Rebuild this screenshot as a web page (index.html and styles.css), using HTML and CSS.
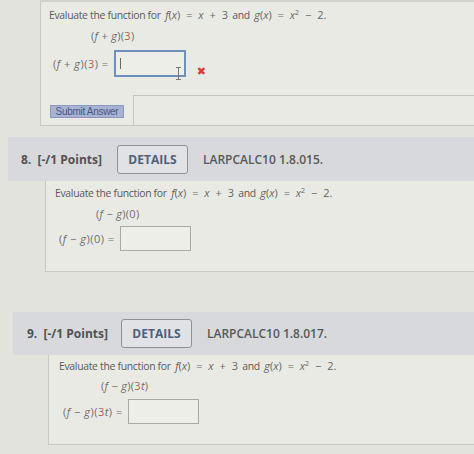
FILE: index.html
```html
<!DOCTYPE html>
<html>
<head>
<meta charset="utf-8">
<link rel="stylesheet" href="styles.css">
</head>
<body>
<div class="page">
  <section class="prev">
    <div class="qbody prev-body">
      <p class="stmt">Evaluate the function for <span class="m"><i>f</i>(<i>x</i>) = <i>x</i> + 3</span> and <span class="m"><i>g</i>(<i>x</i>) = <i>x</i><sup>2</sup> − 2.</span></p>
      <p class="expr">(<i>f</i> + <i>g</i>)(<span class="num">3</span>)</p>
      <div class="answer">
        <span class="lbl">(<i>f</i> + <i>g</i>)(<span class="num">3</span>) =</span>
        <span class="input active"><span class="caret"></span><span class="ibeam"></span></span>
        <span class="wrong">✖</span>
      </div>
      <div class="submit-row">
        <button class="submit">Submit Answer</button>
        <div class="frame"></div>
      </div>
    </div>
  </section>

  <section class="q q8">
    <header class="qhead">
      <span class="pts">8.&nbsp; [-/1 Points]</span>
      <span class="details">DETAILS</span>
      <span class="code">LARPCALC10 1.8.015.</span>
    </header>
    <div class="qbody">
      <p class="stmt">Evaluate the function for <span class="m"><i>f</i>(<i>x</i>) = <i>x</i> + 3</span> and <span class="m"><i>g</i>(<i>x</i>) = <i>x</i><sup>2</sup> − 2.</span></p>
      <p class="expr">(<i>f</i> − <i>g</i>)(0)</p>
      <div class="answer">
        <span class="lbl">(<i>f</i> − <i>g</i>)(0) =</span>
        <span class="input"></span>
      </div>
    </div>
  </section>

  <section class="q q9">
    <header class="qhead">
      <span class="pts">9.&nbsp; [-/1 Points]</span>
      <span class="details">DETAILS</span>
      <span class="code">LARPCALC10 1.8.017.</span>
    </header>
    <div class="qbody">
      <p class="stmt">Evaluate the function for <span class="m"><i>f</i>(<i>x</i>) = <i>x</i> + 3</span> and <span class="m"><i>g</i>(<i>x</i>) = <i>x</i><sup>2</sup> − 2.</span></p>
      <p class="expr">(<i>f</i> − <i>g</i>)(<span class="num">3</span><i>t</i>)</p>
      <div class="answer">
        <span class="lbl">(<i>f</i> − <i>g</i>)(<span class="num">3</span><i>t</i>) =</span>
        <span class="input"></span>
      </div>
    </div>
  </section>
</div>
</body>
</html>
```

FILE: styles.css
```css
html, body {
  margin: 0;
  padding: 0;
}
body {
  background: #e3e3dd;
  font-family: "Open Sans", "Liberation Sans", sans-serif;
  color: #595959;
  width: 474px;
  height: 454px;
  overflow: hidden;
}
.page {
  display: flex;
  flex-direction: column;
}
p { margin: 0; }

.qbody {
  background: #eaeae5;
  border-left: 1px solid #c9c9c3;
  border-bottom: 1px solid #c9c9c3;
  box-sizing: border-box;
  display: flex;
  flex-direction: column;
}
.prev-body {
  margin-left: 40px;
  height: 126px;
  padding: 6px 0 0 8px;
  border-top: 2px solid #d2d2cc;
}
.stmt {
  font-size: 10.4px;
  line-height: 14px;
  letter-spacing: -0.3px;
  white-space: nowrap;
}
.m {
  color: #666;
  font-size: 11px;
  letter-spacing: 0;
  word-spacing: 3px;
  margin: 0 2px;
}
.m i, .expr i, .lbl i { font-style: italic; }
sup {
  font-size: 7px;
  line-height: 0;
  vertical-align: 4px;
}
.expr {
  font-size: 11px;
  line-height: 14px;
  letter-spacing: 0.3px;
  color: #6e6e6e;
  margin: 7px 0 0 42px;
}
.num { color: #b55a50; }
.answer {
  display: flex;
  align-items: center;
  gap: 5px;
  margin: 6px 0 0 4px;
  font-size: 11px;
  letter-spacing: 0.5px;
  color: #6e6e6e;
}
.input {
  display: inline-block;
  width: 71px;
  height: 25px;
  box-sizing: border-box;
  border: 1px solid #a9aaa6;
  background: #eeeee9;
  position: relative;
}
.input.active {
  border: 2px solid #6f8fbf;
  height: 27px;
  width: 72px;
}
.caret {
  position: absolute;
  left: 4px;
  top: 6px;
  width: 1px;
  height: 11px;
  background: #666;
}
.ibeam {
  position: absolute;
  left: 60px;
  top: 15px;
  width: 5px;
  height: 13px;
  border-top: 1px solid #777;
  border-bottom: 1px solid #777;
  box-sizing: border-box;
  background: linear-gradient(#777, #777) center / 1px 100% no-repeat;
}
.wrong {
  color: #e03a3a;
  font-size: 11px;
  margin: 16px 0 0 6px;
  font-family: "DejaVu Sans", sans-serif;
  font-weight: bold;
}
.submit-row {
  display: flex;
  margin-top: 17px;
  flex: 1;
}
.submit {
  margin: 10px 0 0 1px;
  height: 13px;
  width: 74px;
  padding: 0;
  background: #a8b3d3;
  border: 1px solid #8c98bd;
  color: #4a5683;
  font-family: "Liberation Sans", Arial, sans-serif;
  font-size: 10px;
  line-height: 11px;
  letter-spacing: -0.3px;
}
.frame {
  flex: 1;
  margin-left: 9px;
  border-top: 1px solid #c5c5bf;
  border-left: 1px solid #c5c5bf;
}

.qhead {
  display: flex;
  align-items: center;
  background: #d7d9dd;
  box-sizing: border-box;
  font-weight: 700;
  font-size: 12px;
  color: #525252;
  white-space: nowrap;
}
.details {
  display: inline-flex;
  align-items: center;
  justify-content: center;
  width: 71px;
  height: 29px;
  box-sizing: border-box;
  border: 1px solid #8d9198;
  border-radius: 3px;
  background: #e0e2e6;
  color: #50617a;
  font-size: 12px;
  margin-left: 15px;
}
.code {
  margin-left: 15px;
  font-weight: 600;
  color: #585858;
}

.q8 { margin-top: 11px; }
.q8 .qhead {
  margin-left: 8px;
  height: 44px;
  padding-left: 13px;
}
.q8 .qbody {
  margin-left: 45px;
  height: 91px;
  padding: 5px 0 0 9px;
}
.q8 .expr { margin-top: 7px; margin-left: 41px; }
.q8 .answer { margin-top: 5px; }

.q9 { margin-top: 40px; }
.q9 .qhead {
  margin-left: 13px;
  height: 43px;
  padding-left: 14px;
}
.q9 .details { margin-left: 13px; }
.q9 .qbody {
  margin-left: 48px;
  height: 90px;
  padding: 4px 0 0 10px;
}
.q9 .expr { margin-top: 6px; margin-left: 42px; }
.q9 .answer { margin-top: 6px; }
```
